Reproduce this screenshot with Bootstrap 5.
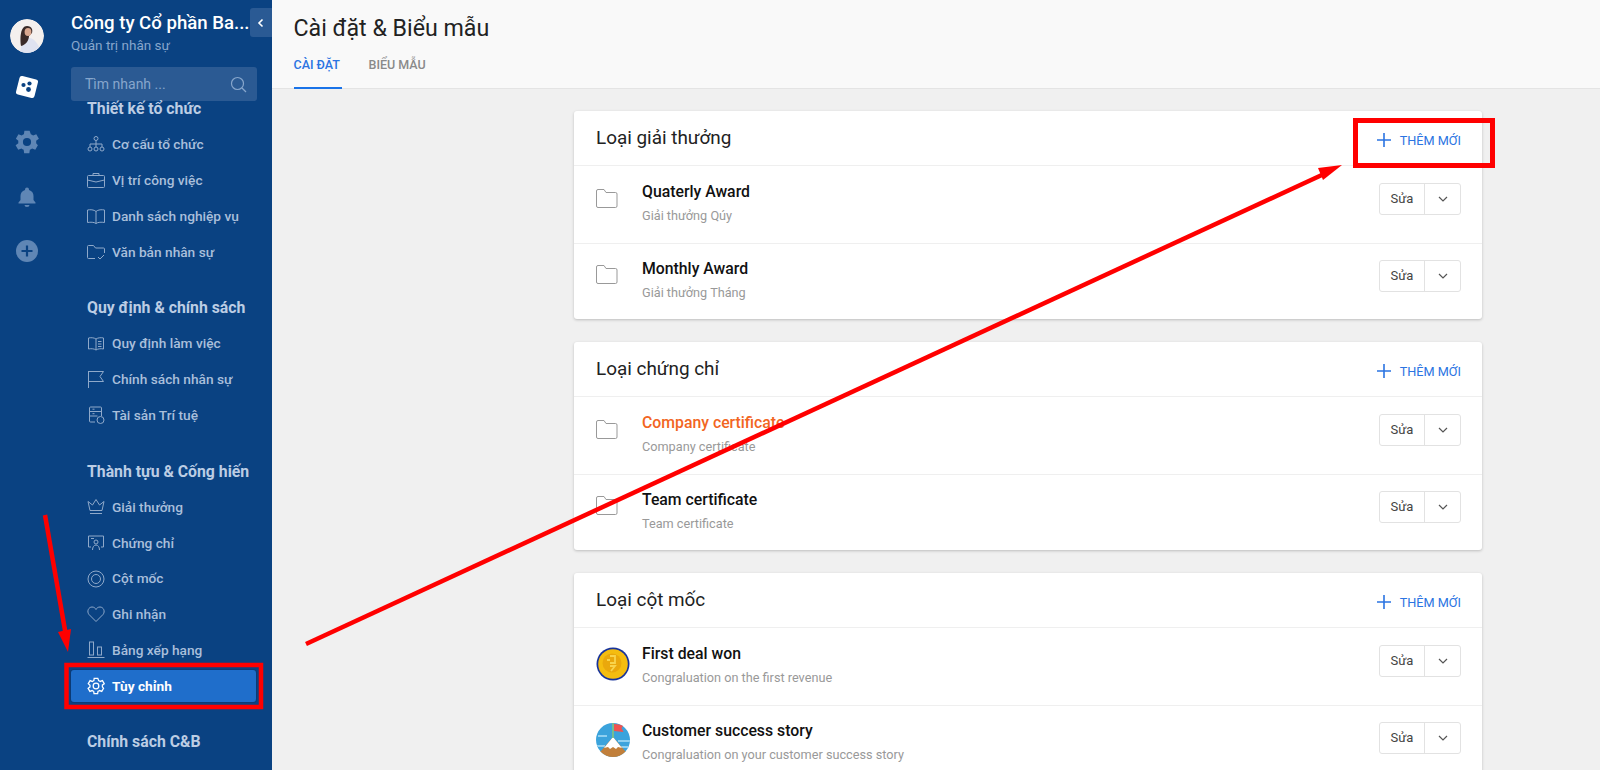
<!DOCTYPE html>
<html lang="vi">
<head>
<meta charset="utf-8">
<title>Cài đặt & Biểu mẫu</title>
<link href="https://cdn.jsdelivr.net/npm/bootstrap@5.3.0/dist/css/bootstrap.min.css" rel="stylesheet">
<style>
html,body{height:770px;overflow:hidden;}
body{font-family:Roboto,"Liberation Sans",sans-serif;background:#f0f0f0;color:#111;position:relative;}
.shell{height:770px;}
.side{width:271.500px;background:#0a4282;height:770px;overflow:hidden;flex:none;}
.rail{width:53px;flex:none;padding-top:19px;}
.avatar{width:34px;height:34px;border-radius:50%;display:block;}
.railicon{display:block;}
.ri1{margin-top:22px;}
.ri2{margin-top:30px;}
.ri3{margin-top:30px;}
.ri4{margin-top:30px;}
.sidemain{width:218.500px;flex:none;position:relative;padding-left:18px;}
.company{color:#fff;font-size:18.600px;font-weight:500;line-height:22px;padding-top:12px;white-space:nowrap;height:34px;}
.sub{color:#87a6cc;font-size:13.500px;line-height:18px;margin-top:2px;}
.collapse-btn{position:absolute;left:196.500px;top:8px;width:22px;height:29px;background:#2a5a94;border-radius:3px 0 0 3px;color:#fff;}
.searchbox{width:186px;height:34px;background:#2b5a93;border-radius:3px;margin-top:13px;color:#87a6cc;font-size:14px;padding:0 10px 0 14px;}
.grp{color:#bccde4;font-size:15.800px;font-weight:700;line-height:20px;margin:0 0 0 16px;white-space:nowrap;}
.grpfirst{margin-top:-2px;}
.grpgap{margin-top:28.500px;}
.grplast{margin-top:30px;}
.menu{list-style:none;margin:7.500px 0 0 16px;padding:0;}
.menu li{height:35.800px;display:flex;align-items:center;color:#a9bfdb;font-size:13.700px;font-weight:500;white-space:nowrap;}
.menu svg{width:18px;height:18px;margin-right:7px;flex:none;}
.actv{width:185px;height:32px;background:#1f6ecb;border-radius:3px;margin-top:2px;color:#fff;font-size:13.700px;font-weight:700;padding-left:16px;box-shadow:0 0 0 1px #0c3a75;}
.actv svg{margin-right:7px;}
.mainpane{flex:1;min-width:0;}
.topbar{height:89px;background:#f9f9f9;border-bottom:1px solid #e4e4e4;padding-left:22px;}
.ptitle{font-size:23.200px;font-weight:400;line-height:28px;padding-top:14px;margin:0;color:#222;height:42px;}
.tabsrow{margin-top:6px;gap:27px;}
.tabi{font-size:12.500px;font-weight:500;height:41px;line-height:34px;color:#8a8a8a;padding:0;white-space:nowrap;}
.tabi.on{color:#2b74e2;border-bottom:2px solid #1a73e8;width:48px;}
.content{padding:22px 118px 0 302.500px;}
.setcard{background:#fff;border:0;border-radius:3px;box-shadow:0 1px 3px rgba(0,0,0,.22);margin-bottom:23px;}
.sethead{height:55px;border-bottom:1px solid #efefef;padding:0 21px 0 22px;}
.settitle{font-size:18.900px;font-weight:400;color:#222;margin:1px 0 0;}
.addbtn{color:#2b74e2;font-size:12.700px;font-weight:400;gap:9px;margin-top:5px;}
.rowi{height:76.500px;padding:0 21px 0 22px;}
.rowi+.rowi{border-top:1px solid #efefef;}
.ico{width:46px;flex:none;}
.icof{padding-top:20px;}
.icom{padding-top:18.500px;}
.rowi+.rowi .icof{padding-top:19px;}
.rowi+.rowi .icom{padding-top:17.500px;}
.rtext{padding-top:16px;}
.rowi+.rowi .rtext{padding-top:15px;}
.rname{font-size:15.800px;font-weight:500;color:#111;line-height:20px;}
.rdesc{font-size:12.700px;color:#999;line-height:18px;margin-top:5px;}
.orange{color:#f26522;}
.splitb{height:32px;margin-top:17px;border:1px solid #e2e2e2;border-radius:3px;background:#fff;font-size:13px;color:#444;}
.rowi+.rowi .splitb{margin-top:16px;}
.splitb span{display:flex;align-items:center;justify-content:center;height:100%;}
.splita{width:45px;border-right:1px solid #e2e2e2;}
.splitc{width:35px;}
.anno{position:absolute;left:0;top:0;width:1600px;height:770px;pointer-events:none;}
</style>
</head>
<body>
<div class="d-flex shell">
<aside class="side d-flex">
 <div class="rail d-flex flex-column align-items-center">
  <svg class="avatar" viewBox="0 0 34 34"><defs><clipPath id="av"><circle cx="17" cy="17" r="17"/></clipPath></defs><g clip-path="url(#av)"><rect width="34" height="34" fill="#f4f0ee"/><path d="M10 34c1-9 4-15 9-15s10 6 12 15z" fill="#dfe2f0"/><path d="M11 27c-1-7-1-20 6-20 5 0 6 4 5 7l-3 3c0 4-3 9-8 10z" fill="#3a2a28"/><ellipse cx="18" cy="13" rx="3.400" ry="4" fill="#d9a78f"/></g></svg>
  <svg class="railicon ri1" width="24" height="24" viewBox="0 0 24 24"><rect x="2.500" y="2.500" width="19" height="19" rx="2.500" fill="#fff" transform="rotate(14 12 12)"/><circle cx="8.500" cy="10" r="2.100" fill="#0a4282"/><circle cx="14.500" cy="8.500" r="2.100" fill="#0a4282"/><circle cx="13.500" cy="14.500" r="2.400" fill="#0a4282"/></svg>
  <svg class="railicon ri2" width="26" height="26" viewBox="1.500 1.500 21 21" fill="#5f86b5"><path d="M19.400 13a7.600 7.600 0 0 0 0-2l2.200-1.700-2.100-3.600-2.600 1a7.500 7.500 0 0 0-1.800-1L14.100 3H9.900l-.4 2.700a7.500 7.500 0 0 0-1.800 1l-2.600-1-2.100 3.600L5 11a7.600 7.600 0 0 0 0 2l-2.200 1.700 2.100 3.600 2.600-1a7.500 7.500 0 0 0 1.800 1l.4 2.700h4.200l.4-2.700a7.500 7.500 0 0 0 1.800-1l2.600 1 2.100-3.600zM12 15.300a3.300 3.300 0 1 1 0-6.600 3.300 3.300 0 0 1 0 6.600z"/></svg>
  <svg class="railicon ri3" width="24" height="24" viewBox="0 0 24 24" fill="#5f86b5"><path d="M12 2.500a2 2 0 0 1 2 2v.4c3 .8 4.500 3.300 4.500 6.100v4l2 2.500v1h-17v-1l2-2.500v-4c0-2.800 1.500-5.300 4.500-6.100v-.4a2 2 0 0 1 2-2zM9.500 20h5a2.500 2 0 0 1-5 0z"/></svg>
  <svg class="railicon ri4" width="24" height="24" viewBox="0 0 24 24"><circle cx="12" cy="12" r="11" fill="#5f86b5"/><path d="M12 6.500v11M6.500 12h11" stroke="#0a4282" stroke-width="2.200"/></svg>
 </div>
 <div class="sidemain">
  <div class="company">Công ty Cổ phần Ba...</div>
  <div class="sub">Quản trị nhân sự</div>
  <div class="collapse-btn d-flex align-items-center justify-content-center"><svg width="10" height="10" viewBox="0 0 10 10"><path d="M6.500 1.500 3 5l3.500 3.500" fill="none" stroke="#fff" stroke-width="1.600"/></svg></div>
  <div class="searchbox d-flex align-items-center justify-content-between"><span>Tìm nhanh ...</span><svg width="17" height="17" viewBox="0 0 17 17" fill="none" stroke="#87a6cc" stroke-width="1.200"><circle cx="7.500" cy="7.500" r="6"/><path d="m12 12 4 4"/></svg></div>
  <div class="grp grpfirst">Thiết kế tổ chức</div>
  <ul class="menu">
   <li><svg viewBox="0 0 18 18" fill="none" stroke="#8fa9ca"><circle cx="9" cy="3.500" r="2"/><path d="M9 5.500v3.500M3 12v-3h12v3M9 9v3"/><circle cx="3" cy="14" r="2"/><circle cx="9" cy="14" r="2"/><circle cx="15" cy="14" r="2"/></svg>Cơ cấu tổ chức</li>
   <li><svg viewBox="0 0 18 18" fill="none" stroke="#8fa9ca"><rect x=".5" y="4.500" width="17" height="12" rx="1"/><path d="M6 4.500v-2h6v2M.5 9l8.500 2 8.500-2"/></svg>Vị trí công việc</li>
   <li><svg viewBox="0 0 18 18" fill="none" stroke="#8fa9ca"><path d="M9 4.500C7 2.500 3 2.500.5 3v12.500c3-.5 6.500-.5 8.500 1 2-1.500 5.500-1.500 8.500-1V3C15 2.500 11 2.500 9 4.500zM9 4.500v12"/></svg>Danh sách nghiệp vụ</li>
   <li><svg viewBox="0 0 18 18" fill="none" stroke="#8fa9ca"><path d="M8 15.500H1.500a1 1 0 0 1-1-1v-11a1 1 0 0 1 1-1h5l2 2.500h8a1 1 0 0 1 1 1v4M11 14l2 2 4-4"/></svg>Văn bản nhân sự</li>
  </ul>
  <div class="grp grpgap">Quy định &amp; chính sách</div>
  <ul class="menu">
   <li><svg viewBox="0 0 18 18" fill="none" stroke="#8fa9ca"><path d="M9 4C7 2.500 3.500 2.500 1.500 3v11c2-.5 5.500-.5 7.500 1 2-1.500 5.500-1.500 7.500-1V3C14.500 2.500 11 2.500 9 4zM9 4v11M11 6.500h3.500M11 9h3.500M11 11.500h3.500"/></svg>Quy định làm việc</li>
   <li><svg viewBox="0 0 18 18" fill="none" stroke="#8fa9ca"><path d="M1.500 1v17M1.500 1.500h15l-3.500 5 3.500 5h-15"/></svg>Chính sách nhân sự</li>
   <li><svg viewBox="0 0 18 18" fill="none" stroke="#8fa9ca"><path d="M8 16H3.500a1 1 0 0 1-1-1V2a1 1 0 0 1 1-1h10a1 1 0 0 1 1 1v8M2.500 5.500h12M2.500 10h8M5.500 3.200h2M5.500 7.700h2"/><circle cx="13.500" cy="14" r="3.500"/></svg>Tài sản Trí tuệ</li>
  </ul>
  <div class="grp grpgap">Thành tựu &amp; Cống hiến</div>
  <ul class="menu">
   <li><svg viewBox="0 0 18 18" fill="none" stroke="#8fa9ca"><path d="M3 12.500 1 3.500l4.500 3.500L9 1.500 12.500 7 17 3.500l-2 9zM3 15.500h12"/></svg>Giải thưởng</li>
   <li><svg viewBox="0 0 18 18" fill="none" stroke="#8fa9ca"><path d="M4 13H1.500V2h15v11H14"/><circle cx="9" cy="8" r="2"/><path d="M5.500 16c0-3 1.500-5 3.500-5s3.500 2 3.500 5M4 4.500h3"/></svg>Chứng chỉ</li>
   <li><svg viewBox="0 0 18 18" fill="none" stroke="#8fa9ca"><circle cx="9" cy="9" r="8"/><circle cx="9" cy="9" r="4.500"/></svg>Cột mốc</li>
   <li><svg viewBox="0 0 18 18" fill="none" stroke="#8fa9ca"><path d="M9 16.500 2 9.500C-.5 6.500 1.500 2 5 2c2 0 3.200 1 4 2.500C9.800 3 11 2 13 2c3.500 0 5.500 4.500 3 7.500z"/></svg>Ghi nhận</li>
   <li><svg viewBox="0 0 18 18" fill="none" stroke="#8fa9ca"><rect x="2.500" y="1" width="4" height="13"/><rect x="10.500" y="6" width="4" height="8"/><path d="M.5 16.500h17"/></svg>Bảng xếp hạng</li>
  </ul>
  <div class="actv d-flex align-items-center"><svg width="18" height="18" viewBox="1.500 1.500 21 21" fill="none" stroke="#fff" stroke-width="1.500"><path d="M19.400 13a7.600 7.600 0 0 0 0-2l2.200-1.700-2.100-3.600-2.600 1a7.500 7.500 0 0 0-1.800-1L14.100 3H9.900l-.4 2.700a7.500 7.500 0 0 0-1.800 1l-2.600-1-2.100 3.600L5 11a7.600 7.600 0 0 0 0 2l-2.200 1.700 2.100 3.600 2.600-1a7.500 7.500 0 0 0 1.800 1l.4 2.700h4.200l.4-2.700a7.500 7.500 0 0 0 1.800-1l2.600 1 2.100-3.600z"/><circle cx="12" cy="12" r="3.300"/></svg>Tùy chỉnh</div>
  <div class="grp grplast">Chính sách C&amp;B</div>
 </div>
</aside>
<main class="mainpane">
 <div class="topbar">
  <h1 class="ptitle">Cài đặt &amp; Biểu mẫu</h1>
  <div class="d-flex tabsrow"><div class="tabi on">CÀI ĐẶT</div><div class="tabi">BIỂU MẪU</div></div>
 </div>
 <div class="content">
  <section class="setcard">
   <div class="sethead d-flex align-items-center justify-content-between"><h2 class="settitle">Loại giải thưởng</h2><div class="addbtn d-flex align-items-center"><svg width="14" height="14" viewBox="0 0 14 14"><path d="M7 0v14M0 7h14" stroke="#2b74e2" stroke-width="1.600"/></svg>THÊM MỚI</div></div>
   <div class="rowi d-flex align-items-start"><div class="ico icof"><svg width="22" height="20" viewBox="0 0 22 20" fill="none" stroke="#999"><path d="M.5 2a1.500 1.500 0 0 1 1.500-1.500h6l2 3h9.500a1.500 1.500 0 0 1 1.500 1.500v12a1.500 1.500 0 0 1-1.500 1.500H2A1.500 1.500 0 0 1 .5 17z"/></svg></div><div class="flex-grow-1 rtext"><div class="rname">Quaterly Award</div><div class="rdesc">Giải thưởng Qúy</div></div><div class="splitb d-flex"><span class="splita">Sửa</span><span class="splitc"><svg width="10" height="6" viewBox="0 0 10 6"><path d="m1 1 4 4 4-4" fill="none" stroke="#555" stroke-width="1.200"/></svg></span></div></div>
   <div class="rowi d-flex align-items-start"><div class="ico icof"><svg width="22" height="20" viewBox="0 0 22 20" fill="none" stroke="#999"><path d="M.5 2a1.500 1.500 0 0 1 1.500-1.500h6l2 3h9.500a1.500 1.500 0 0 1 1.500 1.500v12a1.500 1.500 0 0 1-1.500 1.500H2A1.500 1.500 0 0 1 .5 17z"/></svg></div><div class="flex-grow-1 rtext"><div class="rname">Monthly Award</div><div class="rdesc">Giải thưởng Tháng</div></div><div class="splitb d-flex"><span class="splita">Sửa</span><span class="splitc"><svg width="10" height="6" viewBox="0 0 10 6"><path d="m1 1 4 4 4-4" fill="none" stroke="#555" stroke-width="1.200"/></svg></span></div></div>
  </section>
  <section class="setcard">
   <div class="sethead d-flex align-items-center justify-content-between"><h2 class="settitle">Loại chứng chỉ</h2><div class="addbtn d-flex align-items-center"><svg width="14" height="14" viewBox="0 0 14 14"><path d="M7 0v14M0 7h14" stroke="#2b74e2" stroke-width="1.600"/></svg>THÊM MỚI</div></div>
   <div class="rowi d-flex align-items-start"><div class="ico icof"><svg width="22" height="20" viewBox="0 0 22 20" fill="none" stroke="#999"><path d="M.5 2a1.500 1.500 0 0 1 1.500-1.500h6l2 3h9.500a1.500 1.500 0 0 1 1.500 1.500v12a1.500 1.500 0 0 1-1.500 1.500H2A1.500 1.500 0 0 1 .5 17z"/></svg></div><div class="flex-grow-1 rtext"><div class="rname orange">Company certificate</div><div class="rdesc">Company certificate</div></div><div class="splitb d-flex"><span class="splita">Sửa</span><span class="splitc"><svg width="10" height="6" viewBox="0 0 10 6"><path d="m1 1 4 4 4-4" fill="none" stroke="#555" stroke-width="1.200"/></svg></span></div></div>
   <div class="rowi d-flex align-items-start"><div class="ico icof"><svg width="22" height="20" viewBox="0 0 22 20" fill="none" stroke="#999"><path d="M.5 2a1.500 1.500 0 0 1 1.500-1.500h6l2 3h9.500a1.500 1.500 0 0 1 1.500 1.500v12a1.500 1.500 0 0 1-1.500 1.500H2A1.500 1.500 0 0 1 .5 17z"/></svg></div><div class="flex-grow-1 rtext"><div class="rname">Team certificate</div><div class="rdesc">Team certificate</div></div><div class="splitb d-flex"><span class="splita">Sửa</span><span class="splitc"><svg width="10" height="6" viewBox="0 0 10 6"><path d="m1 1 4 4 4-4" fill="none" stroke="#555" stroke-width="1.200"/></svg></span></div></div>
  </section>
  <section class="setcard">
   <div class="sethead d-flex align-items-center justify-content-between"><h2 class="settitle">Loại cột mốc</h2><div class="addbtn d-flex align-items-center"><svg width="14" height="14" viewBox="0 0 14 14"><path d="M7 0v14M0 7h14" stroke="#2b74e2" stroke-width="1.600"/></svg>THÊM MỚI</div></div>
   <div class="rowi d-flex align-items-start"><div class="ico icom"><svg width="34" height="34" viewBox="0 0 34 34"><circle cx="17" cy="17" r="16.500" fill="#17339b"/><circle cx="17" cy="17" r="14.800" fill="#f5bd10"/><circle cx="16" cy="16" r="9.500" fill="#eaa80c"/><path d="M14 9h5v7h-5M14 13h-3M14 19h5l-4 5" fill="none" stroke="#f9d44c" stroke-width="1.800"/></svg></div><div class="flex-grow-1 rtext"><div class="rname">First deal won</div><div class="rdesc">Congraluation on the first revenue</div></div><div class="splitb d-flex"><span class="splita">Sửa</span><span class="splitc"><svg width="10" height="6" viewBox="0 0 10 6"><path d="m1 1 4 4 4-4" fill="none" stroke="#555" stroke-width="1.200"/></svg></span></div></div>
   <div class="rowi d-flex align-items-start"><div class="ico icom"><svg width="34" height="34" viewBox="0 0 34 34"><defs><clipPath id="cs"><circle cx="17" cy="17" r="17"/></clipPath></defs><g clip-path="url(#cs)"><rect width="34" height="34" fill="#3ba3dc"/><path d="M2 13h9M22 18h12M0 23h9M24 24h10" stroke="#8fd0f0" stroke-width="2"/><path d="M0 34V28h5L17 14l12 14h5v6z" fill="#c17f3b"/><path d="M8 25 17 14l9 11-4-1-2 2-3-2-3 2-2-2z" fill="#fff"/><path d="M17 0v15" stroke="#7cc08a" stroke-width="1.800"/><path d="M18 1l10 1-2.500 3 2 4-9.500-1z" fill="#ef5350"/></g></svg></div><div class="flex-grow-1 rtext"><div class="rname">Customer success story</div><div class="rdesc">Congraluation on your customer success story</div></div><div class="splitb d-flex"><span class="splita">Sửa</span><span class="splitc"><svg width="10" height="6" viewBox="0 0 10 6"><path d="m1 1 4 4 4-4" fill="none" stroke="#555" stroke-width="1.200"/></svg></span></div></div>
  </section>
 </div>
</main>
</div>
<svg class="anno" viewBox="0 0 1600 770">
 <rect x="66.500" y="665" width="194.500" height="42" fill="none" stroke="#f00" stroke-width="4.500"/>
 <rect x="1355.500" y="120.500" width="137" height="45" fill="none" stroke="#f00" stroke-width="5"/>
 <path d="M45 515 66 636" stroke="#f00" stroke-width="4.500"/><path d="M58 632 71 629 68 652z" fill="#f00"/>
 <path d="M306 644 1324 174" stroke="#f00" stroke-width="4.500"/><path d="M1318 168 1342 165 1323 180z" fill="#f00"/>
</svg>
<script src="https://cdn.jsdelivr.net/npm/bootstrap@5.3.0/dist/js/bootstrap.bundle.min.js"></script>
</body>
</html>
